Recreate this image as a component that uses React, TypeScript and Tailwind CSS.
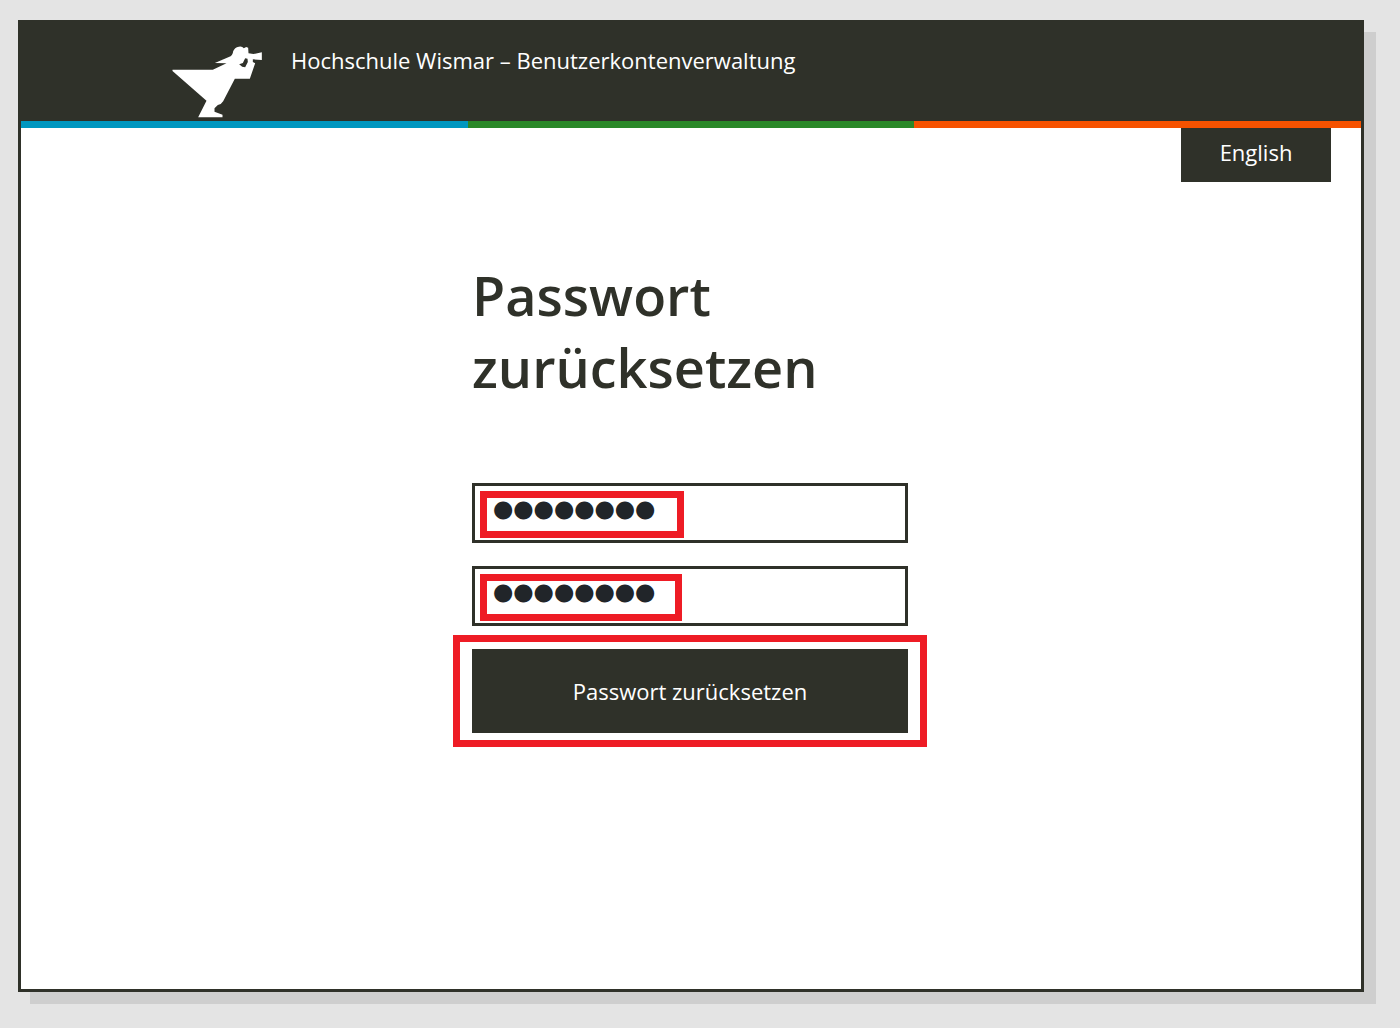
import { useState } from "react";

interface PasswordFieldProps {
  id: string;
  label: string;
  markClass: string;
  value: string;
  onChange: (value: string) => void;
}

const stripes = ["bg-[#0097c0]", "bg-[#2a8828]", "bg-[#f65200]"];

function BirdLogo() {
  return (
    <svg viewBox="37 32 272 216" className="h-[72px] w-[91px]" fill="#fff" aria-hidden="true">
      <path d="M38 103H159L200 84L165 83L207 65Q219 62 220 48Q224 36 237 34Q247 32 252 39L259 35L265 37L266 54L281 56L306 51V74L279 72V80L286 84L270 130H225L190 198Q186 206 174 209L164 219V229L188 238V246H115L140 196L38 107Z" />
      <path d="M256 69L263 70L264 80L256 96L247 94L238 87L249 83Z" fill="#2f3129" />
    </svg>
  );
}

function PasswordField({ id, label, markClass, value, onChange }: PasswordFieldProps) {
  return (
    <div className="relative">
      <label htmlFor={id} className="sr-only">
        {label}
      </label>
      <input
        id={id}
        type="password"
        value={value}
        onChange={(e) => onChange(e.target.value)}
        className="block h-[60px] w-full border-[3px] border-[#2f3129] bg-white px-[18px] pb-3 font-['Lato',sans-serif] text-[35px] leading-[42px] text-[#212529] outline-none [-webkit-text-stroke:5px_#212529]"
      />
      <div className={`pointer-events-none absolute top-2 left-2 h-[47px] border-[7px] border-[#ee1c25] ${markClass}`} />
    </div>
  );
}

export default function App() {
  const [password, setPassword] = useState("passwort");
  const [repeated, setRepeated] = useState("passwort");

  return (
    <div className="flex min-h-screen bg-[#e4e4e4] pt-5 pr-9 pb-9 pl-[18px] font-['Open_Sans',sans-serif] text-[#2f3129]">
      <div className="flex-1 border-[3px] border-[#2f3129] bg-white shadow-[12px_12px_0_#cecece]">
        <header className="flex h-[98px] items-start gap-7 bg-[#2f3129] pt-[23px] pl-[151px]">
          <BirdLogo />
          <span className="text-[22px] leading-7 text-white">Hochschule Wismar – Benutzerkontenverwaltung</span>
        </header>
        <div className="grid h-[7px] grid-cols-3">
          {stripes.map((color) => (
            <div key={color} className={color} />
          ))}
        </div>

        <div className="flex justify-end pr-[30px]">
          <a href="#en" className="flex h-[54px] w-[150px] justify-center bg-[#2f3129] pt-2.5 text-[22px] leading-7 text-white">
            English
          </a>
        </div>

        <main className="mx-auto w-[438px] pt-[77px] pr-0.5">
          <h1 className="text-[54px] leading-[72px] font-semibold">Passwort zurücksetzen</h1>
          <form className="mt-20 flex flex-col gap-[23px]" onSubmit={(e) => e.preventDefault()}>
            <PasswordField id="password" label="Neues Passwort" markClass="w-[204px]" value={password} onChange={setPassword} />
            <PasswordField id="repeat" label="Passwort wiederholen" markClass="w-[202px]" value={repeated} onChange={setRepeated} />
            <div className="relative">
              <button type="submit" className="h-[84px] w-full bg-[#2f3129] text-[22px] leading-7 text-white">
                Passwort zurücksetzen
              </button>
              <div className="pointer-events-none absolute -inset-x-[19px] -inset-y-3.5 border-[7px] border-[#ee1c25]" />
            </div>
          </form>
        </main>
      </div>
    </div>
  );
}
